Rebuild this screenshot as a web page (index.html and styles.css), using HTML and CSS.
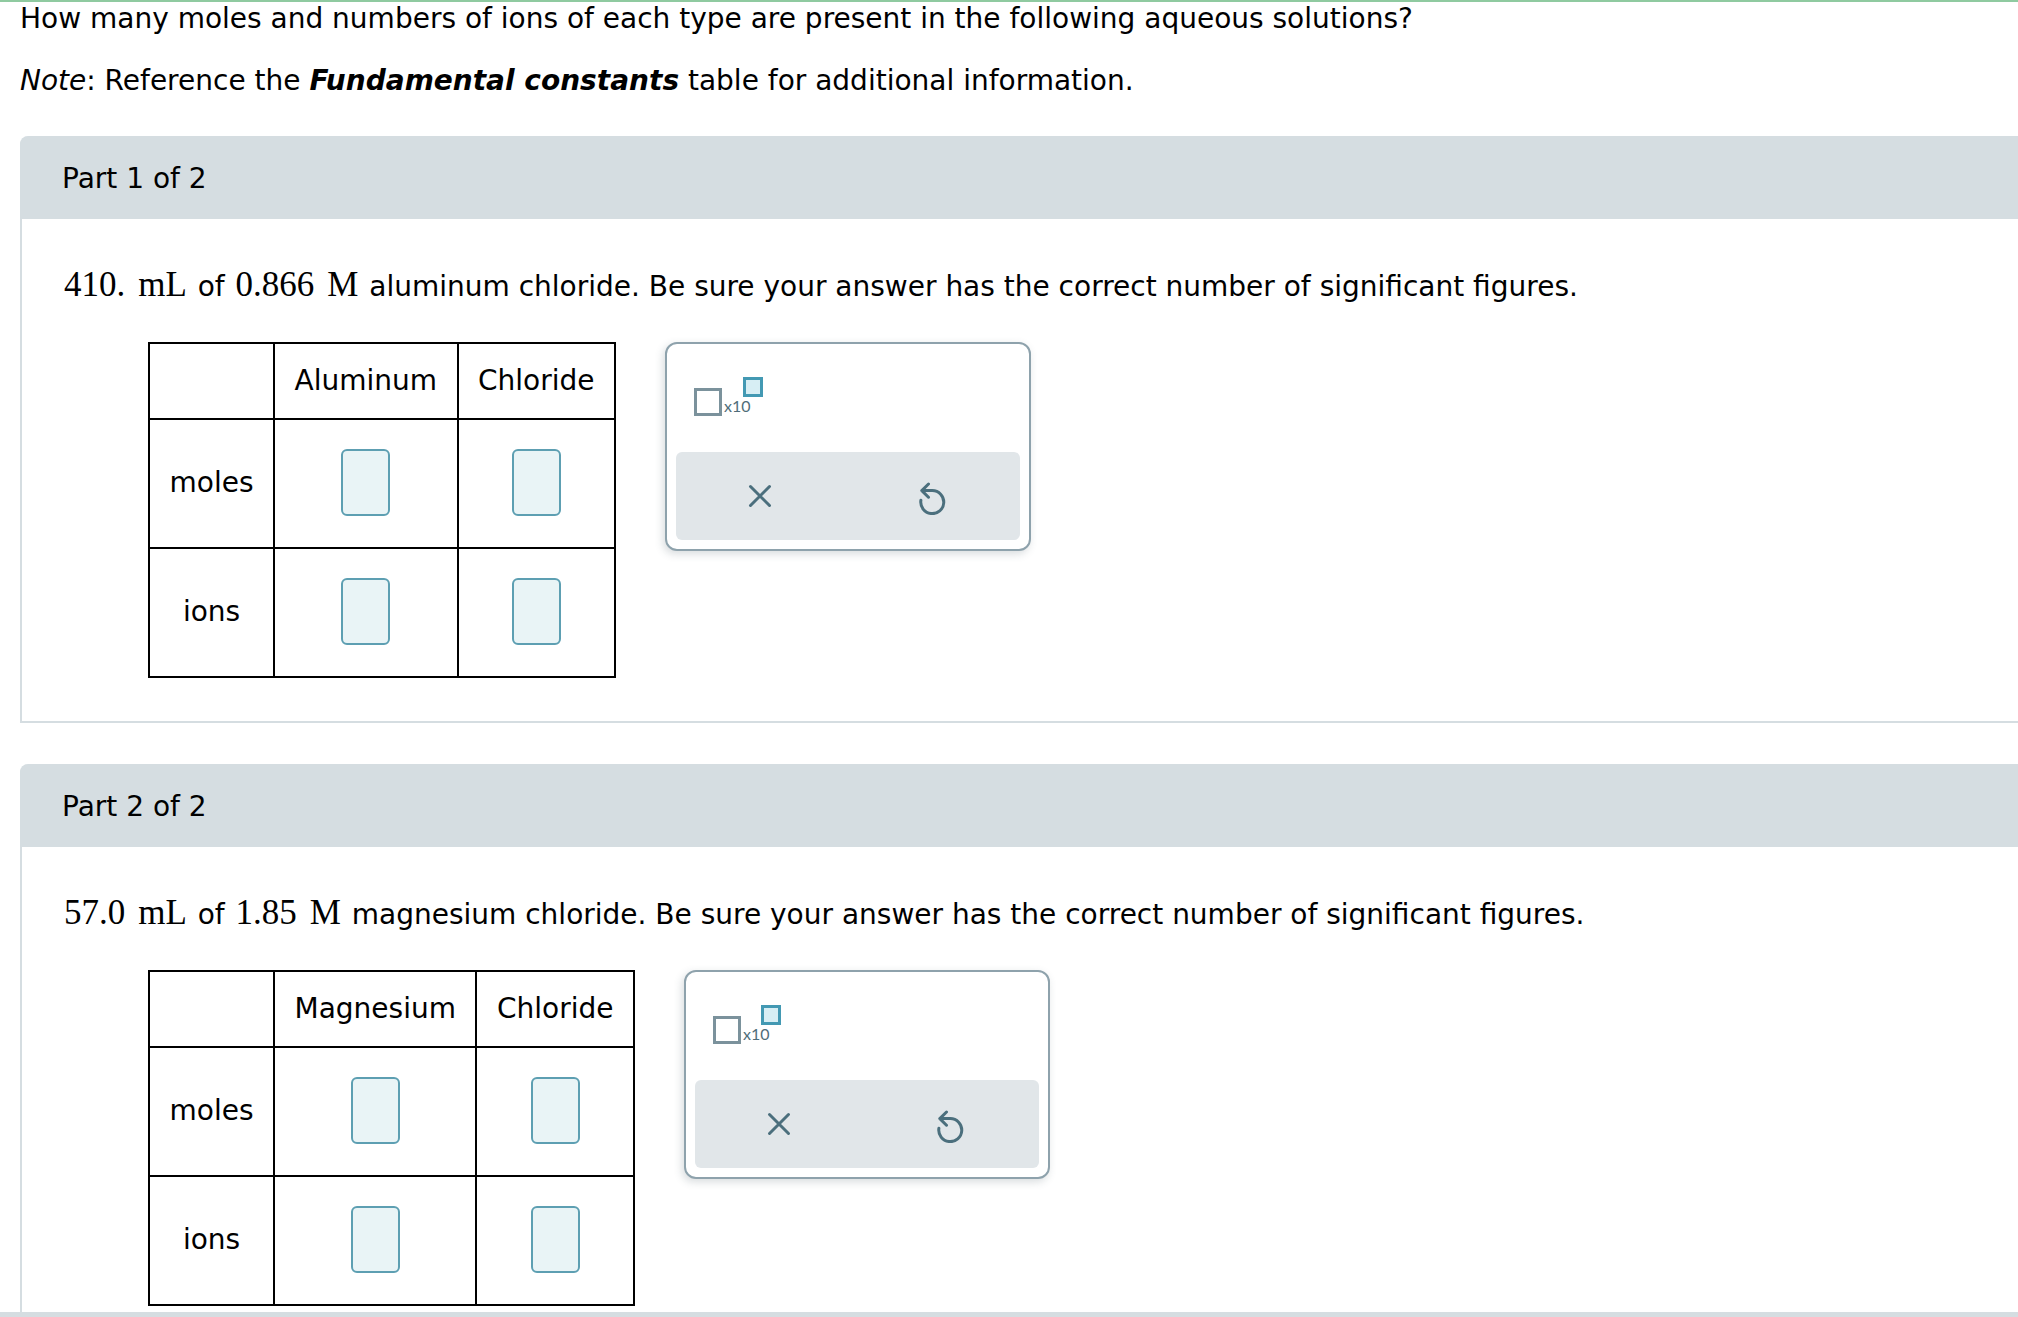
FILE: index.html
```html
<!DOCTYPE html>
<html lang="en">
<head>
<meta charset="utf-8">
<title>Moles and ions</title>
<link rel="stylesheet" href="styles.css">
</head>
<body>
<div class="topline"></div>
<main class="page">
  <p class="intro">How many moles and numbers of ions of each type are present in the following aqueous solutions?</p>
  <p class="note"><i>Note</i>: Reference the <b><i>Fundamental constants</i></b> table for additional information.</p>

  <section class="part">
    <header class="part-head">Part 1 of 2</header>
    <div class="part-body">
      <p class="question"><span class="m">410.</span> <span class="m">mL</span> of <span class="m">0.866</span> <span class="m">M</span> aluminum chloride. Be sure your answer has the correct number of significant figures.</p>
      <div class="work">
        <table class="grid">
          <tr class="head"><th></th><th>Aluminum</th><th>Chloride</th></tr>
          <tr><th>moles</th><td><span class="box"></span></td><td><span class="box"></span></td></tr>
          <tr><th>ions</th><td><span class="box"></span></td><td><span class="box"></span></td></tr>
        </table>
        <div class="tool">
          <div class="expo"><span class="base"></span><span class="ten">x10</span><span class="sup"></span></div>
          <div class="btns">
            <svg class="ico-x" width="24" height="24" viewBox="0 0 24 24"><path d="M2.5 2.5 L21.5 21.5 M21.5 2.5 L2.5 21.5"/></svg>
            <svg class="ico-undo" width="27" height="33" viewBox="0 0 27 33"><path d="M9.5 2 L2.8 8.6 L9.5 15.2 M2.8 8.6 H13.3 A11.5 11.5 0 1 1 1.9 18.3"/></svg>
          </div>
        </div>
      </div>
    </div>
  </section>

  <section class="part">
    <header class="part-head">Part 2 of 2</header>
    <div class="part-body">
      <p class="question"><span class="m">57.0</span> <span class="m">mL</span> of <span class="m">1.85</span> <span class="m">M</span> magnesium chloride. Be sure your answer has the correct number of significant figures.</p>
      <div class="work">
        <table class="grid">
          <tr class="head"><th></th><th>Magnesium</th><th>Chloride</th></tr>
          <tr><th>moles</th><td><span class="box"></span></td><td><span class="box"></span></td></tr>
          <tr><th>ions</th><td><span class="box"></span></td><td><span class="box"></span></td></tr>
        </table>
        <div class="tool">
          <div class="expo"><span class="base"></span><span class="ten">x10</span><span class="sup"></span></div>
          <div class="btns">
            <svg class="ico-x" width="24" height="24" viewBox="0 0 24 24"><path d="M2.5 2.5 L21.5 21.5 M21.5 2.5 L2.5 21.5"/></svg>
            <svg class="ico-undo" width="27" height="33" viewBox="0 0 27 33"><path d="M9.5 2 L2.8 8.6 L9.5 15.2 M2.8 8.6 H13.3 A11.5 11.5 0 1 1 1.9 18.3"/></svg>
          </div>
        </div>
      </div>
    </div>
  </section>
</main>
<div class="hscroll"></div>
</body>
</html>
```

FILE: styles.css
```css
html, body {
  margin: 0;
  padding: 0;
  overflow: hidden;
  background: #fff;
}

body {
  font-family: "DejaVu Sans", Verdana, sans-serif;
  font-size: 28px;
  color: #000;
}

.topline {
  height: 2px;
  background: #8fcaa0;
}

.page {
  padding-left: 20px;
  margin-right: -60px;
}

.intro {
  margin: 0;
  line-height: 34px;
}

.note {
  margin: 28px 0 0;
  line-height: 34px;
}

.part {
  margin-top: 38px;
  border: 2px solid #d5dde1;
  border-top: 0;
  border-radius: 9px 0 0 0;
}

.part + .part {
  margin-top: 41px;
}

.part-head {
  background: #d5dde1;
  border-radius: 8px 0 0 0;
  margin: 0 -2px 0 -2px;
  height: 83px;
  box-sizing: border-box;
  padding: 26px 0 0 42px;
  line-height: 34px;
}

.part-body {
  padding: 46px 0 43px 40px;
}

.question {
  margin: 0;
  line-height: 40px;
}

.m {
  font-family: "Liberation Serif", "Times New Roman", serif;
  font-size: 35px;
  margin: 0 2px;
}

.work {
  display: flex;
  align-items: flex-start;
  gap: 49px;
  margin: 35px 0 0 86px;
}

.grid {
  border-collapse: collapse;
}

.grid th,
.grid td {
  border: 2px solid #000;
  padding: 29px 19.5px 31px;
  text-align: center;
  vertical-align: middle;
  font-weight: normal;
  line-height: 34px;
}

.grid .head th {
  padding: 20px 19.5px;
}

.box {
  display: block;
  margin: 0 auto;
  width: 49px;
  height: 67px;
  box-sizing: border-box;
  border: 2.5px solid #5d9fb2;
  border-radius: 6px;
  background: #e9f4f6;
}

.tool {
  width: 366px;
  height: 209px;
  box-sizing: border-box;
  border: 2px solid #8ea2ac;
  border-radius: 12px;
  padding: 0 9px 9px;
  display: flex;
  flex-direction: column;
  background: #fff;
  box-shadow: -2px 3px 8px rgba(60, 80, 90, 0.2);
}

.expo {
  display: flex;
  align-items: flex-end;
  height: 39px;
  margin: 33px 0 0 18px;
}

.base {
  width: 28px;
  height: 28px;
  box-sizing: border-box;
  border: 3px solid #7b929c;
}

.ten {
  font-family: Lato, "Open Sans", sans-serif;
  font-size: 16px;
  line-height: 16px;
  color: #4f6d79;
  margin: 0 0 2px 2px;
}

.sup {
  align-self: flex-start;
  width: 20px;
  height: 20px;
  box-sizing: border-box;
  border: 3px solid #4399b3;
  background: #d7eef4;
  margin-left: -8px;
}

.btns {
  margin-top: auto;
  height: 88px;
  border-radius: 6px;
  background: #e1e6e9;
  display: grid;
  grid-template-columns: 1fr 1fr;
  align-items: center;
  justify-items: center;
}

.btns svg {
  fill: none;
  stroke: #4b6f7d;
  stroke-width: 3;
  stroke-linecap: round;
  stroke-linejoin: round;
}

.ico-x {
  margin-left: -4px;
}

.ico-undo {
  margin: 4px 0 0 -4px;
}

.hscroll {
  position: fixed;
  left: 0;
  right: 0;
  bottom: 0;
  height: 5px;
  background: #d5dde1;
}
```
